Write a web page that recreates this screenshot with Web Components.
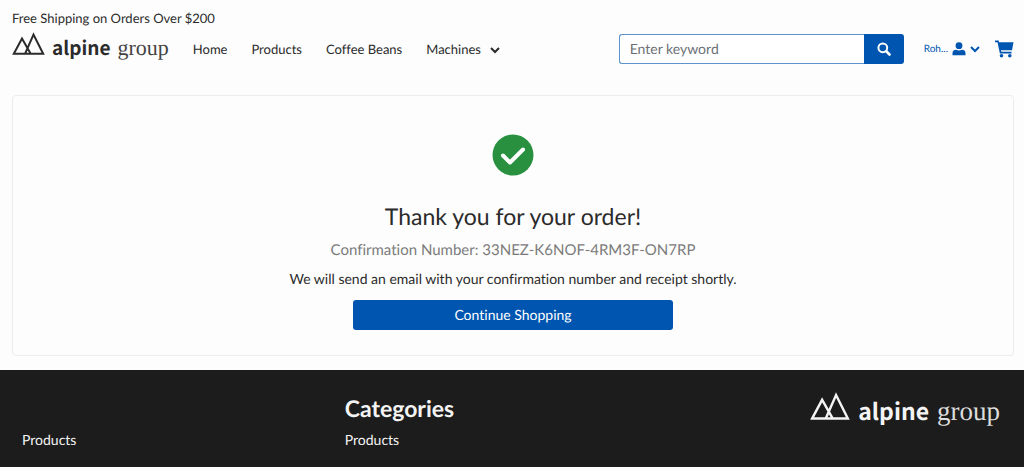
<!DOCTYPE html>
<html lang="en">
<head>
<meta charset="utf-8">
<meta name="viewport" content="width=device-width, initial-scale=1">
<title>Order confirmation - Alpine Group</title>
<style>
  html { background: #fdfdfd; }
  body { margin: 0; min-height: 100vh; display: flex; flex-direction: column; font: 14px/20px Lato, "Open Sans", sans-serif; color: #2b2b2b; text-rendering: geometricPrecision; font-variant-ligatures: none; --blue: #0055b1; }
  site-footer { flex: 1; }
</style>
</head>
<body>
<site-header></site-header>
<order-confirmation number="33NEZ-K6NOF-4RM3F-ON7RP"></order-confirmation>
<site-footer>
  <footer-column><a href="#products">Products</a></footer-column>
  <footer-column heading="Categories"><a href="#categories">Products</a></footer-column>
</site-footer>

<script>
class BaseElement extends HTMLElement {
  constructor() {
    super();
    this.attachShadow({ mode: 'open' });
  }
  connectedCallback() {
    const t = document.createElement('template');
    t.innerHTML = this.render();
    this.shadowRoot.replaceChildren(t.content.cloneNode(true));
  }
}

customElements.define('brand-logo', class extends BaseElement {
  render() {
    return `
    <style>
      :host { display: inline-block; --size: 19px; --group: 22px; --mark: 33px; --gap: 7px; }
      :host([large]) { --size: 23px; --group: 27px; --mark: 40px; --gap: 8px; }
      a { display: flex; align-items: baseline; gap: var(--gap); color: inherit; text-decoration: none; line-height: 30px; }
      svg { width: var(--mark); height: auto; fill: none; stroke: currentColor; stroke-width: 2; stroke-linejoin: miter; }
      b { font: bold var(--size)/30px "Noto Sans CJK JP", "Noto Sans", sans-serif; }
      span { font: var(--group)/30px "Liberation Serif", serif; color: var(--group-color, #444); }
    </style>
    <a href="#home" aria-label="alpine group">
      <svg viewBox="0 0 33 23" aria-hidden="true"><path d="M1.800 21.800 10 6.500 18.700 21.800ZM13 21.800 21.500 2.500 31.200 21.800Z"/></svg>
      <b>alpine</b><span>group</span>
    </a>`;
  }
});

customElements.define('main-nav', class extends BaseElement {
  render() {
    return `
    <style>
      :host { display: block; }
      nav { display: flex; align-items: center; gap: 24px; font-size: 13px; }
      a { color: inherit; text-decoration: none; white-space: nowrap; }
      .menu { display: flex; align-items: center; gap: 8px; }
      svg { width: 12px; height: 12px; fill: none; stroke: currentColor; stroke-width: 2; }
    </style>
    <nav>
      <a href="#home">Home</a><a href="#products">Products</a><a href="#beans">Coffee Beans</a>
      <a class="menu" href="#machines">Machines <svg viewBox="0 0 12 12" aria-hidden="true"><path d="m2 5 4 4 4-4"/></svg></a>
    </nav>`;
  }
});

customElements.define('search-box', class extends BaseElement {
  render() {
    return `
    <style>
      :host { display: block; width: 285px; }
      form { display: flex; height: 30px; box-sizing: border-box; border-radius: 3px; }
      input { flex: 1; min-width: 0; box-sizing: border-box; padding: 0 10px; border: 1px solid #5c93cc; border-right: 0; border-radius: 3px 0 0 3px; background: #fff; font: inherit; color: inherit; text-rendering: inherit; }
      input::placeholder { color: #6c7075; opacity: 1; }
      button { width: 40px; padding: 0; border: 0; border-radius: 0 3px 3px 0; background: var(--blue); display: grid; place-items: center; }
      svg { width: 14px; height: 14px; fill: none; stroke: #fff; stroke-width: 2; stroke-linecap: round; }
    </style>
    <form role="search">
      <input type="text" placeholder="Enter keyword" aria-label="Enter keyword">
      <button type="button" aria-label="Search"><svg viewBox="0 0 14 14" aria-hidden="true"><circle cx="5.800" cy="5.800" r="4.400"/><path d="m9.500 9.500 3 3" stroke-width="2.600"/></svg></button>
    </form>`;
  }
});

customElements.define('account-links', class extends BaseElement {
  render() {
    return `
    <style>
      :host { display: flex; align-items: center; gap: 15px; color: var(--blue); font-size: 10px; }
      a { display: flex; align-items: center; color: inherit; text-decoration: none; }
      .account { gap: 4px; }
      svg { display: block; fill: currentColor; }
      .chevron { fill: none; stroke: currentColor; stroke-width: 2; }
    </style>
    <a class="account" href="#account">Roh...
      <svg width="14" height="14" viewBox="0 0 14 14" aria-hidden="true"><circle cx="7" cy="3.700" r="3.400"/><path d="M.5 13.300v-2.100Q.5 8 4 7.800q3 1.400 6 0 3.500.2 3.500 3.400v2.100z"/></svg>
      <svg class="chevron" width="10" height="12" viewBox="0 0 10 12" aria-hidden="true"><path d="m1 4 4 4 4-4"/></svg>
    </a>
    <a href="#cart" aria-label="Cart">
      <svg width="19" height="18" viewBox="0 0 19 18" aria-hidden="true"><path d="M0 .5h3.700l.4 1.700H18.500L17 10.300H6l.3 1.500H16.500v1.700H4.900L2.500 2.200H0z"/><circle cx="6.500" cy="15.700" r="1.800"/><circle cx="14.800" cy="15.700" r="1.800"/></svg>
    </a>`;
  }
});

customElements.define('site-header', class extends BaseElement {
  render() {
    return `
    <style>
      :host { display: block; padding: 8px 10px 0 12px; }
      p { margin: 0; font-size: 13px; }
      .bar { display: flex; align-items: center; height: 42px; }
      brand-logo { padding-bottom: 4px; }
      main-nav { margin-left: 24px; }
      search-box { margin-left: auto; }
      account-links { margin-left: 20px; }
    </style>
    <header>
      <p>Free Shipping on Orders Over $200</p>
      <div class="bar">
        <brand-logo></brand-logo>
        <main-nav></main-nav>
        <search-box></search-box>
        <account-links></account-links>
      </div>
    </header>`;
  }
});

customElements.define('order-confirmation', class extends BaseElement {
  render() {
    return `
    <style>
      :host { display: block; padding: 25px 10px 14px 12px; }
      main { display: flex; flex-direction: column; align-items: center; padding: 38px 16px 25px; border: 1px solid #ececec; border-radius: 4px; text-align: center; }
      svg { display: block; width: 42px; height: 42px; }
      h1 { margin: 24px 0 0; font-size: 23px; line-height: 32px; font-weight: 400; }
      .number { margin: 8px 0 0; font-size: 15px; line-height: 20px; color: #7b7b7b; }
      .note { margin: 9px 0 0; }
      a { display: block; width: 320px; max-width: 100%; margin-top: 11px; line-height: 30px; border-radius: 3px; background: var(--blue); color: #fff; text-decoration: none; }
    </style>
    <main>
      <svg viewBox="0 0 42 42" role="img" aria-label="Success"><circle cx="21" cy="21" r="20.500" fill="#28903f"/><path d="m11 21.500 7 7L31 15.500" fill="none" stroke="#fff" stroke-width="4"  stroke-linecap="round" stroke-linejoin="round"/></svg>
      <h1>Thank you for your order!</h1>
      <p class="number">Confirmation Number: ${this.getAttribute('number')}</p>
      <p class="note">We will send an email with your confirmation number and receipt shortly.</p>
      <a href="#shop">Continue Shopping</a>
    </main>`;
  }
});

customElements.define('footer-column', class extends BaseElement {
  render() {
    return `
    <style>
      :host { display: block; padding-top: 2px; }
      h2 { margin: 0 0 8px; min-height: 28px; font-size: 23px; line-height: 28px; font-weight: 700; }
      ::slotted(a) { color: inherit; text-decoration: none; }
    </style>
    <h2>${this.getAttribute('heading') || ''}</h2><slot></slot>`;
  }
});

customElements.define('site-footer', class extends BaseElement {
  render() {
    return `
    <style>
      :host { display: block; background: #1c1c1c; color: #f4f4f4; --group-color: #ddd; }
      footer { display: grid; grid-template-columns: 33% 33% 1fr; padding: 22px 24px 16px 22px; }
      brand-logo { justify-self: end; }
    </style>
    <footer><slot></slot><brand-logo large></brand-logo></footer>`;
  }
});
</script>
</body>
</html>
